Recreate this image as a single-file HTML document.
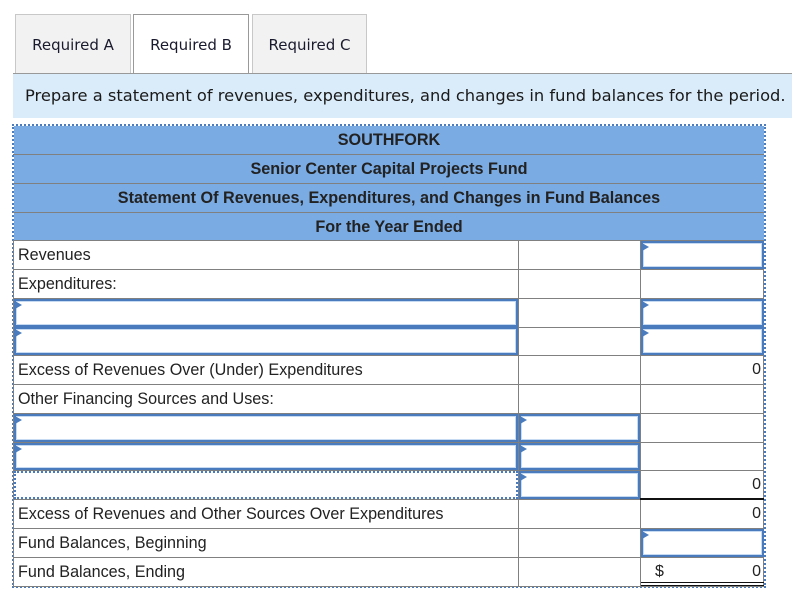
<!DOCTYPE html>
<html><head><meta charset="utf-8"><style>
*{box-sizing:border-box;margin:0;padding:0}
body{width:792px;height:593px;background:#fff;position:relative;overflow:hidden;font-family:"Liberation Sans",Arial,sans-serif}
.a{position:absolute}
.tab{position:absolute;top:14px;height:60px;border:1px solid #c8c8c8;border-bottom:none;background:#f2f2f2;font-family:"DejaVu Sans",Verdana,sans-serif;font-size:15px;color:#1a1a2e;text-align:center;line-height:60px}
.hl{position:absolute;left:13px;width:751px;height:1px;background:#808080}
.vl{position:absolute;width:1px;background:#808080}
.hd{position:absolute;left:14px;width:750px;background:#7aabe3;text-align:center;font-weight:bold;font-size:16.2px;color:#222;line-height:28px}
.t{position:absolute;left:18px;font-size:17px;color:#222;line-height:29px;transform:scaleX(.95);transform-origin:left;white-space:nowrap}
.n{position:absolute;right:31px;font-size:16px;color:#222;line-height:29px}
.in{position:absolute;border:2px solid #4a7cbd;box-shadow:inset 0 0 0 1px #c6daf1;background:#fff}
.in:before{content:"";position:absolute;left:-1px;top:0;border-left:7px solid #4a7cbd;border-top:4px solid transparent;border-bottom:4px solid transparent}
</style></head><body>
<div class="tab" style="left:15px;width:116px">Required A</div>
<div class="tab" style="left:133px;width:116px;background:#fff;border-color:#999;height:61px">Required B</div>
<div class="tab" style="left:252px;width:115px">Required C</div>
<div class="a" style="left:13px;top:73px;width:779px;height:45px;background:#daebf9;border-top:1px solid #999"></div>
<div class="a" style="left:25px;top:73px;line-height:46px;font-family:'DejaVu Sans',Verdana,sans-serif;font-size:16.3px;color:#1a1a1a;white-space:nowrap">Prepare a statement of revenues, expenditures, and changes in fund balances for the period.</div>

<div class="a" style="left:12px;top:124px;width:754px;height:464px;border:2px dotted #4a7cbd"></div>
<div class="hd" style="top:126px;height:28px">SOUTHFORK</div>
<div class="hd" style="top:155px;height:28px">Senior Center Capital Projects Fund</div>
<div class="hd" style="top:184px;height:28px">Statement Of Revenues, Expenditures, and Changes in Fund Balances</div>
<div class="hd" style="top:213px;height:27px">For the Year Ended</div>
<div class="hl" style="top:154px"></div><div class="hl" style="top:183px"></div><div class="hl" style="top:212px"></div>

<div class="hl" style="top:240px"></div><div class="hl" style="top:269px"></div><div class="hl" style="top:298px"></div><div class="hl" style="top:327px"></div><div class="hl" style="top:355px"></div><div class="hl" style="top:384px"></div><div class="hl" style="top:413px"></div><div class="hl" style="top:442px"></div><div class="hl" style="top:470px"></div><div class="hl" style="top:499px"></div><div class="hl" style="top:528px"></div><div class="hl" style="top:557px"></div><div class="hl" style="top:586px"></div>
<div class="vl" style="left:13px;top:240px;height:346px"></div>
<div class="vl" style="left:518px;top:240px;height:346px"></div>
<div class="vl" style="left:640px;top:240px;height:346px"></div>
<div class="vl" style="left:763px;top:240px;height:346px"></div>

<div class="t" style="top:240px">Revenues</div>
<div class="t" style="top:269px">Expenditures:</div>
<div class="t" style="top:355px">Excess of Revenues Over (Under) Expenditures</div>
<div class="t" style="top:384px">Other Financing Sources and Uses:</div>
<div class="t" style="top:499px">Excess of Revenues and Other Sources Over Expenditures</div>
<div class="t" style="top:528px">Fund Balances, Beginning</div>
<div class="t" style="top:557px">Fund Balances, Ending</div>

<div class="in" style="left:641px;top:241px;width:123px;height:28px"></div>
<div class="in" style="left:14px;top:299px;width:504px;height:28px"></div>
<div class="in" style="left:641px;top:299px;width:123px;height:28px"></div>
<div class="in" style="left:14px;top:327px;width:504px;height:28px"></div>
<div class="in" style="left:641px;top:327px;width:123px;height:28px"></div>
<div class="n" style="top:355px">0</div>
<div class="in" style="left:14px;top:414px;width:504px;height:28px"></div>
<div class="in" style="left:519px;top:414px;width:121px;height:28px"></div>
<div class="in" style="left:14px;top:443px;width:504px;height:27px"></div>
<div class="in" style="left:519px;top:443px;width:121px;height:27px"></div>
<div class="a" style="left:14px;top:471px;width:504px;height:28px;border:2px dotted #4a7cbd;background:#fff"></div>
<div class="in" style="left:519px;top:471px;width:121px;height:28px"></div>
<div class="a" style="left:640px;top:498px;width:124px;height:2px;background:#111"></div>
<div class="n" style="top:470px">0</div>
<div class="n" style="top:499px">0</div>
<div class="in" style="left:641px;top:529px;width:123px;height:28px"></div>
<div class="a" style="left:655px;top:557px;font-size:16px;line-height:29px;color:#222">$</div>
<div class="n" style="top:557px">0</div>
<div class="a" style="left:641px;top:582px;width:123px;height:1px;background:#111"></div>
<div class="a" style="left:641px;top:585px;width:123px;height:1px;background:#111"></div>
</body></html>
